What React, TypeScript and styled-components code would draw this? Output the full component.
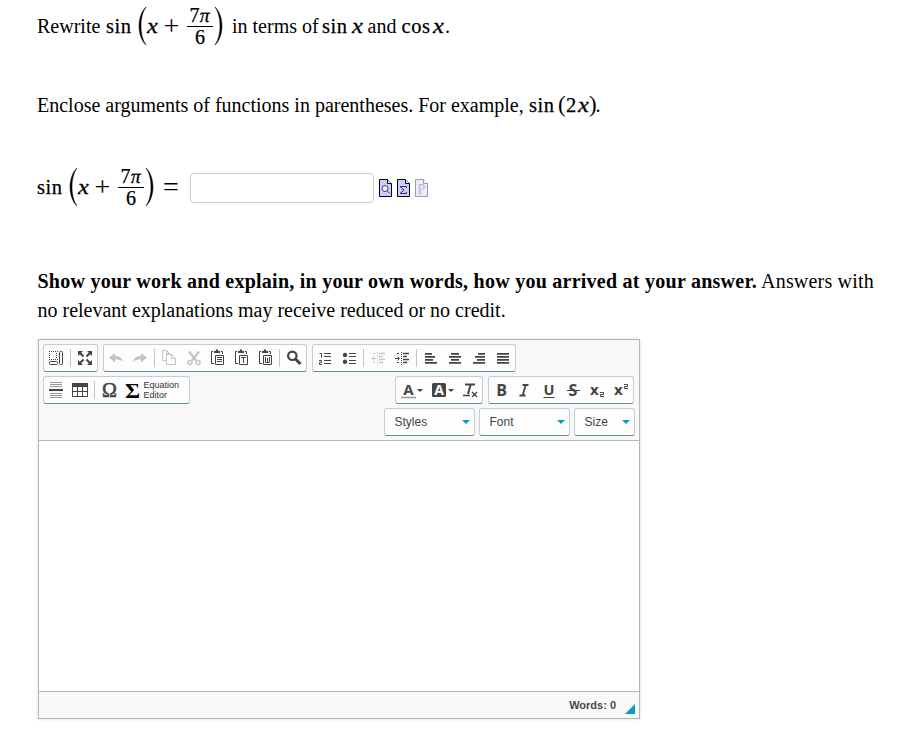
import React from 'react';
import styled, { createGlobalStyle } from 'styled-components';

const Global = createGlobalStyle`
  body { margin: 0; background: #fff; color: #000; font-family: "Liberation Serif", "Times New Roman", serif; }
  * { box-sizing: border-box; }
`;

const Page = styled.main`
  padding-left: 37px;
  width: 920px;
  height: 742px;
  overflow: hidden;
  font-size: 20px;
`;
const Line = styled.div<{ $top?: number; $h: number }>`
  display: flex;
  align-items: center;
  margin-top: ${p => p.$top ?? 0}px;
  height: ${p => p.$h}px;
  line-height: 28px;
`;
const Words = styled.span<{ $w: number; $ls?: number }>`
  flex: none;
  width: ${p => p.$w}px;
  white-space: nowrap;
  letter-spacing: ${p => p.$ls ?? 0}px;
`;
const Fn = styled(Words)`
  font-size: 20.5px;
  letter-spacing: 0.6px;
  -webkit-text-stroke: 0.25px #000;
`;
const Variable = styled(Words)`
  font-style: italic;
  font-size: 20px;
  -webkit-text-stroke: 0.3px #000;
  span { display: inline-block; transform: scaleX(1.22); transform-origin: left; }
`;
const Operator = styled(Words)`
  font-size: 28px;
  line-height: 28px;
`;
const Fence = styled.svg`
  flex: none;
  width: 9px;
  height: 40px;
  fill: #000;
  stroke: #000;
  stroke-width: 0.5px;
`;
const SmallFence = styled(Fn)`
  font-size: 23px;
  -webkit-text-stroke: 0;
`;
const Fraction = styled.span`
  display: grid;
  grid-template-rows: 21px 1px 20px;
  width: 26px;
  margin: 0 1px 0 7px;
  text-align: center;
  font-size: 20px;
  line-height: 20px;
  letter-spacing: 0.5px;
  -webkit-text-stroke: 0.25px #000;
  i + span { letter-spacing: 0; }
  em { display: inline-block; transform: skewX(-8deg); font-style: normal; }
`;
const Bar = styled.i`background: #000;`;

const Argument = () => (
  <>
    <Fence viewBox="0 0 9 40"><path d="M8 1C-1.300 10-1.300 30 8 39C1.300 30 1.300 10 8 1z" /></Fence>
    <Variable $w={16.5}><span>x</span></Variable>
    <Operator $w={16.5}>+</Operator>
    <Fraction><span>7<em>π</em></span><Bar /><span>6</span></Fraction>
    <Fence viewBox="0 0 9 40"><path d="M1 1C10.300 10 10.300 30 1 39C7.700 30 7.700 10 1 1z" /></Fence>
  </>
);

const Answer = styled.input`
  width: 184px;
  height: 30px;
  border: 1px solid #ccc;
  border-radius: 4px;
  background: #fff;
  margin: 2px 5px 0 0;
`;
const Doc = styled.svg<{ $faded?: boolean }>`
  width: 13px;
  height: 18px;
  margin: 2px 5px 0 0;
  opacity: ${p => (p.$faded ? 0.38 : 1)};
`;
const Sheet = ({ faded, children }: { faded?: boolean; children: React.ReactNode }) => (
  <Doc $faded={faded} viewBox="0 0 13 18">
    <path d="M.5.5h8l4 4v13H.5z" fill="#ccf" stroke="#000" />
    <path d="M8.500.5v4h4" fill="#fff" stroke="#000" />
    {children}
  </Doc>
);

const Prompt = styled.div`
  margin: 54px 0 0 0.5px;
  line-height: 29px;
  white-space: nowrap;
`;
const PromptLine = styled.div<{ $ls: number }>`letter-spacing: ${p => p.$ls}px;`;
const Strong = styled.b`letter-spacing: 0.25px;`;

const Editor = styled.section`
  margin: 14px 0 0 1px;
  width: 602px;
  height: 380px;
  border: 1px solid #b6b6b6;
  box-shadow: 0 0 3px rgba(0, 0, 0, 0.15);
  display: flex;
  flex-direction: column;
  font-family: "Liberation Sans", Arial, sans-serif;
`;
const Toolbar = styled.div`
  height: 101px;
  padding: 4px 5px 0 4px;
  background: #f8f8f8;
  border-bottom: 1px solid #b6b6b6;
`;
const ToolRow = styled.div<{ $gap?: number; $end?: boolean }>`
  display: flex;
  gap: ${p => p.$gap ?? 5}px;
  height: 28px;
  margin-bottom: 4px;
  margin-right: ${p => (p.$end ? -1 : 0)}px;
  justify-content: ${p => (p.$end ? 'flex-end' : 'flex-start')};
`;
const Group = styled.div<{ $right?: boolean }>`
  display: flex;
  height: 28px;
  border: 1px solid #c2ced2;
  border-bottom-color: #648c9d;
  border-radius: 3px;
  background: #fdfdfd;
  margin-left: ${p => (p.$right ? 'auto' : 0)};
`;
const Divider = styled.i`
  width: 1px;
  height: 18px;
  margin: 4px 2px;
  background: #c4c4c4;
`;
const Tool = styled.button<{ $w?: number; $off?: boolean }>`
  display: flex;
  padding: 0;
  border: 0;
  background: none;
  width: ${p => p.$w ?? 24}px;
  height: 26px;
  opacity: ${p => (p.$off ? 0.3 : 1)};
  svg { display: block; width: 100%; height: 26px; fill: none; stroke: #444; }
  text { fill: #444; stroke: none; }
  .inverse { fill: #fff; }
`;
const Icon = ({ off, w = 24, label, children }: { off?: boolean; w?: number; label: string; children: React.ReactNode }) => (
  <Tool $off={off} $w={w} aria-label={label} disabled={off}>
    <svg viewBox={`0 0 ${w} 26`}>{children}</svg>
  </Tool>
);
const EquationText = styled.span`
  color: #333;
  font: 9px/10px "Liberation Sans", Arial, sans-serif;
  text-align: left;
  padding: 3px 0 0 0.5px;
`;
const EquationTool = styled(Tool)`
  svg { flex: none; width: 22px; }
  text { fill: #000; }
`;
const Omega = styled.text`
  font: 20px "Liberation Serif", serif;
  && { stroke: #444; stroke-width: 0.6px; }
`;
const Combo = styled.button<{ $w: number }>`
  display: flex;
  align-items: center;
  justify-content: space-between;
  width: ${p => p.$w}px;
  height: 28px;
  padding: 0 4px 1px 9.5px;
  border: 1px solid #c2ced2;
  border-bottom-color: #648c9d;
  border-radius: 3px;
  background: #fdfdfd;
  color: #444;
  font: 12px "Liberation Sans", Arial, sans-serif;
`;
const Caret = styled.i`
  border: 4px solid transparent;
  border-top-color: #0a9bc3;
  border-bottom: 0;
`;
const Canvas = styled.div`flex: 1;`;
const Footer = styled.footer`
  display: flex;
  justify-content: flex-end;
  height: 27px;
  border-top: 1px solid #b6b6b6;
  background: #f8f8f8;
  color: #484848;
  font: bold 11px/27px "Liberation Sans", Arial, sans-serif;
`;
const Grip = styled.i`
  width: 10px;
  height: 10px;
  margin: 12px 4px 0 9px;
  background: #0a9bc3;
  clip-path: polygon(100% 0, 100% 100%, 0 100%);
`;

const Clipboard = ({ children }: { children: React.ReactNode }) => (
  <>
    <path d="M8 6.500H6.500v12H9M16 6.500h1.500V9" />
    <path d="M9 7h6M11 5.500h2" strokeWidth="2" />
    <path d="M10.500 10.500h8v9h-8z" />
    {children}
  </>
);
const indentLines = (
  <>
    <path d="M11.500 7v13" strokeDasharray="1 1" />
    <path d="M7 8.500h3M7 17.500h3" strokeDasharray="2 1" />
    <path d="M13 8.500h6M13 11.500h4M13 14.500h6M13 17.500h4" strokeWidth="1.300" />
  </>
);
const bars = (xs: number[][]) => (
  <path d={xs.map(([x, w], i) => `M${x} ${8.8 + i * 3}h${w}`).join('')} strokeWidth="1.700" />
);
const drop = <path d="M24 12h6l-3 3z" fill="#444" stroke="none" />;
const undoShape = 'M5 12.500L11 8v3c5 0 7 2 8 6-2-2-4-2.500-8-2.500v3z';

export default function App() {
  return (
    <Page>
      <Global />
      <Line $h={52}>
        <Words $w={69}>Rewrite</Words>
        <Fn $w={32}>sin</Fn>
        <Argument />
        <Words $w={99}>&nbsp;&thinsp;in terms of</Words>
        <Fn $w={30}>sin</Fn>
        <Variable $w={15.5}><span>x</span></Variable>
        <Words $w={34}>and</Words>
        <Fn $w={31.500}>cos</Fn>
        <Variable $w={12}><span>x</span></Variable>
        <Words $w={8}>.</Words>
      </Line>
      <Line $top={39} $h={28}>
        <Words $w={492}>Enclose arguments of functions in parentheses. For example,</Words>
        <Fn $w={29}>sin</Fn>
        <SmallFence $w={8}>(</SmallFence>
        <Fn $w={11.5}>2</Fn>
        <Variable $w={11.5}><span>x</span></Variable>
        <SmallFence $w={6.5}>)</SmallFence>
        <Words $w={8}>.</Words>
      </Line>
      <Line $top={42} $h={52}>
        <Fn $w={32}>sin</Fn>
        <Argument />
        <Words $w={9} />
        <Operator $w={27}>=</Operator>
        <Answer aria-label="Answer" />
        <Sheet>
          <circle cx="6" cy="9.500" r="3" fill="#eef" stroke="#446" />
          <path d="M8 11.500l2.500 3" stroke="#446" />
        </Sheet>
        <Sheet><path d="M9.500 9V7.500H3l4 3.500-4 3.500h6.500V13" fill="none" stroke="#335" /></Sheet>
        <Sheet faded><text x="2.500" y="15" fontSize="14" fill="#446">P</text></Sheet>
      </Line>
      <Prompt>
        <PromptLine $ls={0.2}>
          <Strong>Show your work and explain, in your own words, how you arrived at your answer.</Strong> Answers with
        </PromptLine>
        <PromptLine $ls={0}>no relevant explanations may receive reduced or no credit.</PromptLine>
      </Prompt>
      <Editor>
        <Toolbar>
          <ToolRow>
            <Group>
              <Icon label="Show blocks">
                <path d="M5 6.500h9M5 14.500h9M5.500 8v6M12.500 8v6" strokeDasharray="1 1" />
                <rect x="5.500" y="16.500" width="8" height="3" rx="1" />
                <rect x="15.500" y="6.500" width="3" height="13" rx="1" />
              </Icon>
              <Divider />
              <Icon label="Maximize">
                <path d="M7 8l3.500 3.500M17 8l-3.500 3.500M7 18l3.500-3.500M17 18l-3.500-3.500" strokeWidth="2" />
                <path d="M5 6h5l-5 5zM19 6v5l-5-5zM5 20v-5l5 5zM19 20h-5l5-5z" fill="#444" stroke="none" />
              </Icon>
            </Group>
            <Group>
              <Icon off label="Undo"><path d={undoShape} fill="#444" stroke="none" /></Icon>
              <Icon off label="Redo"><path d={undoShape} transform="matrix(-1 0 0 1 24 0)" fill="#444" stroke="none" /></Icon>
              <Divider />
              <Icon off label="Copy">
                <path d="M9 15.500H5.500v-10h4l3 3V10M9.500 5.500v3h3" />
                <path d="M9.500 9.500h5l4 4v6h-9zM14.500 9.500v4h4" />
              </Icon>
              <Icon off label="Cut">
                <path d="M8 6.500l7 9M18 6.500l-7 9" strokeWidth="2.200" />
                <circle cx="9" cy="17.500" r="2" strokeWidth="1.500" /><circle cx="17" cy="17.500" r="2" strokeWidth="1.500" />
              </Icon>
              <Icon label="Paste"><Clipboard><path d="M12 12.500h5M12 14.500h5M12 16.500h5" /></Clipboard></Icon>
              <Icon label="Paste as text"><Clipboard><path d="M12 12.500h5M14.500 12v6" /></Clipboard></Icon>
              <Icon label="Paste from Word"><Clipboard><path d="M12.500 12v5.500h4V12M14.500 13v4" /></Clipboard></Icon>
              <Divider />
              <Icon label="Find">
                <circle cx="10.300" cy="10.800" r="4.200" strokeWidth="2.200" />
                <path d="M13.500 14l5 5" strokeWidth="3" />
              </Icon>
            </Group>
            <Group>
              <Icon label="Numbered list">
                <path d="M6.500 8.500h2v4M6 15.500h2.500v2h-2v2H9" />
                <path d="M11 8.500h7M11 11.500h7M11 15.500h7M11 18.500h7" />
              </Icon>
              <Icon label="Bulleted list">
                <circle cx="8" cy="10" r="2.200" fill="#444" stroke="none" /><circle cx="8" cy="16.800" r="2.200" fill="#444" stroke="none" />
                <path d="M12 8.500h7M12 11.500h7M12 15.500h7M12 18.500h7" />
              </Icon>
              <Divider />
              <Icon off label="Decrease indent">{indentLines}<path d="M6 13.500h4M8 11.500l-2 2 2 2" /></Icon>
              <Icon label="Increase indent">{indentLines}<path d="M5 13.500h4M7.500 11.500l2 2-2 2" /></Icon>
              <Divider />
              <Icon label="Align left">{bars([[6, 7], [6, 10], [6, 8], [6, 12]])}</Icon>
              <Icon label="Center">{bars([[8, 8], [6, 12], [8, 8], [6, 12]])}</Icon>
              <Icon label="Align right">{bars([[11, 7], [8, 10], [10, 8], [6, 12]])}</Icon>
              <Icon label="Justify">{bars([[6, 12], [6, 12], [6, 12], [6, 12]])}</Icon>
            </Group>
          </ToolRow>
          <ToolRow>
            <Group>
              <Icon label="Horizontal line">
                <path d="M6 5.500h12M6 7.500h12M6 9.500h12M6 16.500h12M6 18.500h12M6 20.500h12" stroke="#999" />
                <path d="M5 13h14" strokeWidth="2" />
              </Icon>
              <Icon label="Table">
                <path d="M4.500 7.500h15v12h-15zM4 14.500h16M9.500 10v10M14.500 10v10" />
                <path d="M4 8h16" strokeWidth="4" />
              </Icon>
              <Divider />
              <Icon label="Special character"><Omega x="12.500" y="20" textAnchor="middle">Ω</Omega></Icon>
              <EquationTool $w={68} aria-label="Equation editor">
                <svg viewBox="0 0 22 26"><text x="4" y="20.500" fontSize="22" fontWeight="bold" fontFamily="Liberation Serif" textLength="15" lengthAdjust="spacingAndGlyphs">Σ</text></svg>
                <EquationText>Equation<br />Editor</EquationText>
              </EquationTool>
            </Group>
            <Group $right>
              <Icon w={31} label="Text color">
                <text x="12.500" y="17.500" fontSize="15" fontWeight="bold" textAnchor="middle" fontFamily="Open Sans">A</text>
                <path d="M5 20.500h15" stroke="#999" strokeWidth="1.500" />
                <g transform="translate(-3 0)">{drop}</g>
              </Icon>
              <Icon w={31} label="Background color">
                <rect x="5" y="6" width="14" height="14" rx="1.500" fill="#444" stroke="none" />
                <text className="inverse" x="12" y="18" fontSize="14" fontWeight="bold" textAnchor="middle" fontFamily="Open Sans">A</text>
                <g transform="translate(-3 0)">{drop}</g>
              </Icon>
              <Icon label="Remove format">
                <path d="M7 7.500h10M12.500 8l-2.500 9" strokeWidth="2" /><path d="M5 18.500h7M14 15l5 5M19 15l-5 5" strokeWidth="1.300" />
              </Icon>
            </Group>
            <Group>
              <Icon label="Bold"><text x="12.500" y="19" fontSize="16" fontWeight="bold" textAnchor="middle" fontFamily="Open Sans">B</text></Icon>
              <Icon label="Italic"><path d="M9.500 8h6M6.500 18.500h6M12.700 8l-3 10.500" strokeWidth="1.800" /></Icon>
              <Icon label="Underline"><text x="12" y="17.500" fontSize="14.500" fontWeight="bold" textAnchor="middle" fontFamily="Open Sans">U</text><path d="M6.500 20.500h11" /></Icon>
              <Icon label="Strikethrough"><text x="12" y="19" fontSize="16" fontWeight="bold" textAnchor="middle" fontFamily="Open Sans">S</text><path d="M6 13.500h13" /></Icon>
              <Icon label="Subscript"><text x="5" y="18" fontSize="15" fontWeight="bold" fontFamily="Open Sans">x</text><path d="M15 15.500h3.500v2h-3v2h3.500" /></Icon>
              <Icon label="Superscript"><text x="5" y="18" fontSize="15" fontWeight="bold" fontFamily="Open Sans">x</text><path d="M15 7.500h3.500v2h-3v2h3.500" /></Icon>
            </Group>
          </ToolRow>
          <ToolRow $gap={4} $end>
            <Combo $w={91}>Styles<Caret /></Combo>
            <Combo $w={91}>Font<Caret /></Combo>
            <Combo $w={61}>Size<Caret /></Combo>
          </ToolRow>
        </Toolbar>
        <Canvas />
        <Footer>Words: 0<Grip /></Footer>
      </Editor>
    </Page>
  );
}
